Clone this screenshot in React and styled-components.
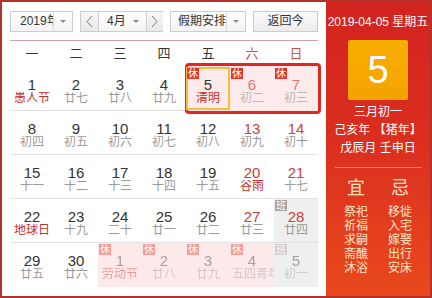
import React from 'react';
import styled, { createGlobalStyle } from 'styled-components';

const Global = createGlobalStyle`
  html, body { margin: 0; padding: 0; background: #fff; }
  body { font-family: "Liberation Sans", "Noto Sans CJK SC", sans-serif; color: #333; }
`;

const Frame = styled.div`
  width: 432px;
  height: 298px;
  box-sizing: border-box;
  border: 2px solid #b5312c;
  display: flex;
  background: #fff;
  overflow: hidden;
`;

const LeftPane = styled.div`
  width: 324px;
  flex: none;
  box-sizing: border-box;
  padding: 9px 8px 0 8px;
  display: flex;
  flex-direction: column;
`;

const Toolbar = styled.div`
  display: flex;
  gap: 7px;
  height: 21px;
`;

const Select = styled.div`
  width: ${p => p.$w}px;
  box-sizing: border-box;
  border: 1px solid #cdcdcd;
  background: linear-gradient(#ffffff, #f3f3f3);
  display: flex;
  font-size: 12px;
  line-height: 19px;
  color: #333;
`;

const SelectText = styled.div`
  flex: 1;
  padding-left: ${p => p.$pl || 9}px;
  overflow: hidden;
  white-space: nowrap;
`;

const ArrowBox = styled.div`
  width: ${p => p.$w || 18}px;
  flex: none;
  border-left: ${p => (p.$plain ? 'none' : '1px solid #dcdcdc')};
  display: flex;
  align-items: center;
  justify-content: center;
`;

const Caret = styled.span`
  width: 0;
  height: 0;
  border-left: 3px solid transparent;
  border-right: 3px solid transparent;
  border-top: 3px solid #8a8a8a;
`;

const Stepper = styled.div`
  width: 83px;
  box-sizing: border-box;
  border: 1px solid #cdcdcd;
  display: flex;
  font-size: 12px;
  line-height: 19px;
`;

const StepBtn = styled.div`
  width: ${p => p.$w}px;
  flex: none;
  background: linear-gradient(#f7f7f7, #e9e9e9);
  display: flex;
  align-items: center;
  justify-content: center;
  border-left: ${p => (p.$divider ? '1px solid #cdcdcd' : 'none')};
`;

const MonthField = styled.div`
  flex: 1;
  display: flex;
  background: linear-gradient(#ffffff, #f3f3f3);
  border-left: 1px solid #cdcdcd;
`;

const TodayBtn = styled.div`
  width: 65px;
  box-sizing: border-box;
  border: 1px solid #cdcdcd;
  background: linear-gradient(#fbfbfb, #ececec);
  font-size: 12px;
  line-height: 19px;
  text-align: center;
  color: #333;
`;

const Divider = styled.div`
  margin-top: 8px;
  height: 1px;
  background: #d7a2a2;
`;

const Weekdays = styled.div`
  display: grid;
  grid-template-columns: repeat(7, 44px);
  height: 26px;
  line-height: 26px;
  font-size: 13px;
  text-align: center;
`;

const Weekday = styled.div`
  color: ${p => (p.$weekend ? '#c9524c' : '#333')};
`;

const Week = styled.div`
  position: relative;
  display: grid;
  grid-template-columns: repeat(7, 44px);
  height: 44px;
  box-sizing: border-box;
  border-bottom: ${p => (p.$last ? 'none' : '1px solid #e1e1e1')};
`;

const HolidayBox = styled.div`
  position: absolute;
  left: 175px;
  top: -4px;
  width: 136px;
  height: 51px;
  box-sizing: border-box;
  border: 3px solid #e1271f;
  border-radius: 4px;
  background: #fdeaea;
  z-index: 0;
`;

const bgMap = { pink: '#fde9e9', gray: '#efefef' };

const Day = styled.div`
  position: relative;
  z-index: 1;
  display: flex;
  flex-direction: column;
  align-items: center;
  padding-top: 10px;
  box-sizing: border-box;
  overflow: hidden;
  background: ${p => bgMap[p.$bg] || 'transparent'};
  box-shadow: ${p => (p.$sel ? 'inset 0 0 0 2px #f4bd3f' : 'none')};
`;

const DayInner = styled.div`
  display: flex;
  flex-direction: column;
  align-items: center;
  width: 100%;
  opacity: ${p => (p.$other ? 0.42 : 1)};
`;

const numColor = p => {
  if (p.$hol) return '#e37474';
  if (p.$we) return '#cc3f3a';
  return '#333';
};

const DayNum = styled.div`
  font-size: 15px;
  line-height: 15px;
  color: ${numColor};
`;

const Lunar = styled.div`
  margin-top: 0px;
  font-size: 12px;
  line-height: 13px;
  width: 100%;
  padding-left: ${p => (p.$long ? 2 : 0)}px;
  box-sizing: border-box;
  text-align: ${p => (p.$long ? 'left' : 'center')};
  white-space: nowrap;
  overflow: hidden;
  color: ${p => (p.$fest ? '#c8302b' : p.$hol ? '#b8b8b8' : '#9b9b9b')};
`;

const Badge = styled.span`
  position: absolute;
  left: 1px;
  top: 1px;
  width: 12px;
  height: 11px;
  font-size: 10px;
  line-height: 11px;
  text-align: center;
  color: #fff;
  background: ${p => (p.$work ? '#a3a3a3' : '#e0362f')};
`;

const RightPane = styled.div`
  flex: 1;
  display: flex;
  flex-direction: column;
  align-items: center;
  padding-top: 11px;
  color: #fff;
  background: linear-gradient(180deg, #d2241f 0%, #da2e20 45%, #e9491c 100%);
`;

const DateLine = styled.div`
  font-size: 12px;
  line-height: 18px;
  white-space: nowrap;
`;

const BigDay = styled.div`
  margin-top: 9px;
  width: 60px;
  height: 60px;
  border-radius: 2px;
  background: linear-gradient(#f8ad00, #f4a300);
  display: flex;
  align-items: center;
  justify-content: center;
  font-size: 38px;
  line-height: 1;
  color: #fff;
`;

const LunarInfo = styled.div`
  margin-top: 3px;
  font-size: 12px;
  line-height: 18px;
  text-align: center;
  white-space: nowrap;
`;

const Rule = styled.div`
  margin-top: 10px;
  width: 87px;
  height: 1px;
  background: #f1806c;
`;

const Almanac = styled.div`
  margin-top: 9px;
  display: grid;
  grid-template-columns: 44px 44px;
  color: #fde6c4;
`;

const AlmanacCol = styled.div`
  display: flex;
  flex-direction: column;
  align-items: center;
`;

const AlmanacHead = styled.div`
  font-size: 18px;
  line-height: 22px;
`;

const AlmanacList = styled.div`
  margin-top: 6px;
  font-size: 12px;
  line-height: 14px;
  text-align: center;
`;

const Chevron = ({ dir }) => (
  <svg width="7" height="13" viewBox="0 0 7 13">
    <polyline
      points={dir === 'left' ? '6,1 1,6.5 6,12' : '1,1 6,6.5 1,12'}
      fill="none"
      stroke="#7a7a7a"
      strokeWidth="1"
    />
  </svg>
);

const weeks = [
  [
    { d: 1, l: '愚人节', fest: true },
    { d: 2, l: '廿七' },
    { d: 3, l: '廿八' },
    { d: 4, l: '廿九' },
    { d: 5, l: '清明', fest: true, sel: true, badge: '休' },
    { d: 6, l: '初二', we: true, hol: true, badge: '休' },
    { d: 7, l: '初三', we: true, hol: true, badge: '休' },
  ],
  [
    { d: 8, l: '初四' },
    { d: 9, l: '初五' },
    { d: 10, l: '初六' },
    { d: 11, l: '初七' },
    { d: 12, l: '初八' },
    { d: 13, l: '初九', we: true },
    { d: 14, l: '初十', we: true },
  ],
  [
    { d: 15, l: '十一' },
    { d: 16, l: '十二' },
    { d: 17, l: '十三' },
    { d: 18, l: '十四' },
    { d: 19, l: '十五' },
    { d: 20, l: '谷雨', we: true, fest: true },
    { d: 21, l: '十七', we: true },
  ],
  [
    { d: 22, l: '地球日', fest: true },
    { d: 23, l: '十九' },
    { d: 24, l: '二十' },
    { d: 25, l: '廿一' },
    { d: 26, l: '廿二' },
    { d: 27, l: '廿三', we: true },
    { d: 28, l: '廿四', we: true, badge: '班', bg: 'gray' },
  ],
  [
    { d: 29, l: '廿五' },
    { d: 30, l: '廿六' },
    { d: 1, l: '劳动节', other: true, fest: true, badge: '休', bg: 'pink' },
    { d: 2, l: '廿八', other: true, badge: '休', bg: 'pink' },
    { d: 3, l: '廿九', other: true, badge: '休', bg: 'pink' },
    { d: 4, l: '五四青年节', other: true, long: true, badge: '休', bg: 'pink' },
    { d: 5, l: '初一', other: true, badge: '班', bg: 'gray' },
  ],
];

const weekdayNames = ['一', '二', '三', '四', '五', '六', '日'];

export default function App() {
  return (
    <>
      <Global />
      <Frame>
        <LeftPane>
          <Toolbar>
            <Select $w={63}>
              <SelectText $pl={9}>2019年</SelectText>
              <ArrowBox><Caret /></ArrowBox>
            </Select>
            <Stepper>
              <StepBtn $w={17}><Chevron dir="left" /></StepBtn>
              <MonthField>
                <SelectText $pl={8}>4月</SelectText>
                <ArrowBox $plain $w={20}><Caret /></ArrowBox>
              </MonthField>
              <StepBtn $w={16} $divider><Chevron dir="right" /></StepBtn>
            </Stepper>
            <Select $w={76}>
              <SelectText $pl={7}>假期安排</SelectText>
              <ArrowBox><Caret /></ArrowBox>
            </Select>
            <TodayBtn>返回今</TodayBtn>
          </Toolbar>
          <Divider />
          <Weekdays>
            {weekdayNames.map((w, i) => (
              <Weekday key={w} $weekend={i >= 5}>{w}</Weekday>
            ))}
          </Weekdays>
          {weeks.map((week, wi) => (
            <Week key={wi} $last={wi === weeks.length - 1}>
              {wi === 0 && <HolidayBox />}
              {week.map((c, ci) => (
                <Day key={ci} $bg={c.bg} $sel={c.sel}>
                  <DayInner $other={c.other}>
                    {c.badge && <Badge $work={c.badge === '班'}>{c.badge}</Badge>}
                    <DayNum $we={c.we && !c.other} $hol={c.hol}>{c.d}</DayNum>
                    <Lunar $fest={c.fest} $hol={c.hol} $long={c.long}>{c.l}</Lunar>
                  </DayInner>
                </Day>
              ))}
            </Week>
          ))}
        </LeftPane>
        <RightPane>
          <DateLine>2019-04-05 星期五</DateLine>
          <BigDay>5</BigDay>
          <LunarInfo>
            <div>三月初一</div>
            <div>己亥年 【猪年】</div>
            <div>戊辰月 壬申日</div>
          </LunarInfo>
          <Rule />
          <Almanac>
            <AlmanacCol>
              <AlmanacHead>宜</AlmanacHead>
              <AlmanacList>
                <div>祭祀</div>
                <div>祈福</div>
                <div>求嗣</div>
                <div>斋醮</div>
                <div>沐浴</div>
              </AlmanacList>
            </AlmanacCol>
            <AlmanacCol>
              <AlmanacHead>忌</AlmanacHead>
              <AlmanacList>
                <div>移徙</div>
                <div>入宅</div>
                <div>嫁娶</div>
                <div>出行</div>
                <div>安床</div>
              </AlmanacList>
            </AlmanacCol>
          </Almanac>
        </RightPane>
      </Frame>
    </>
  );
}
